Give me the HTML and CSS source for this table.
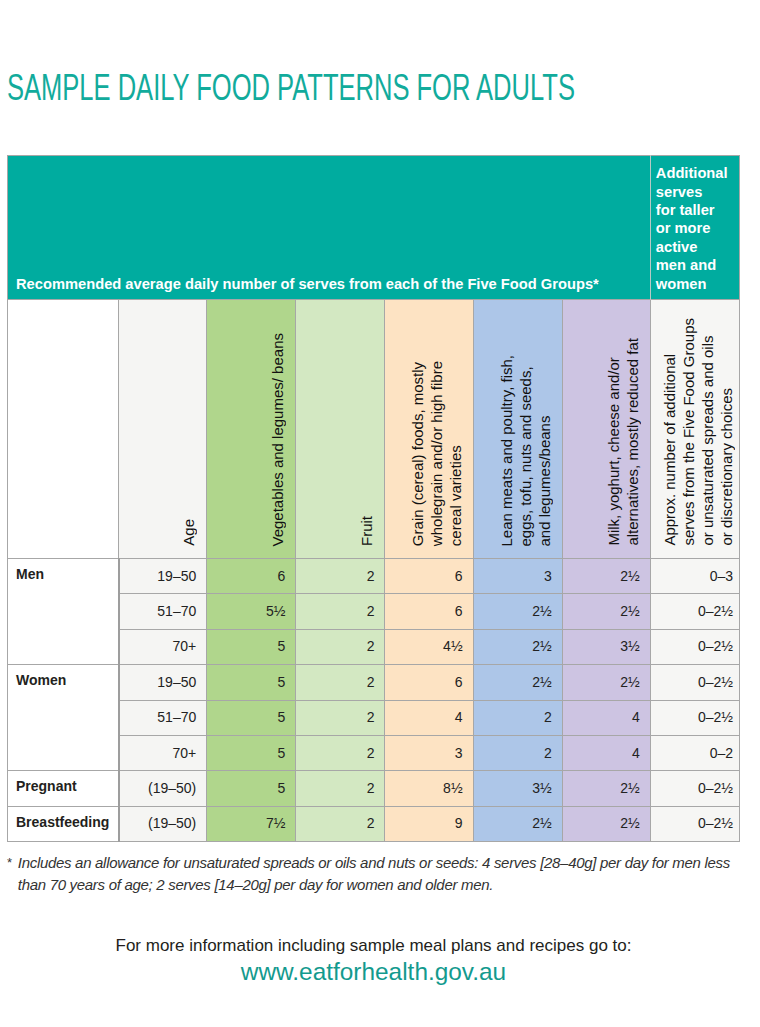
FILE: index.html
```html
<!DOCTYPE html>
<html lang="en">
<head>
  <meta charset="UTF-8" />
  <title>Sample daily food patterns for adults</title>
  <link rel="stylesheet" href="styles.css">
</head>
<body>
  <h1 class="title">SAMPLE DAILY FOOD PATTERNS FOR ADULTS</h1>

  <table class="serves">
    <colgroup>
      <col class="c-label"><col class="c-age"><col class="c-veg"><col class="c-fruit">
      <col class="c-grain"><col class="c-meat"><col class="c-milk"><col class="c-add">
    </colgroup>
    <thead>
      <tr class="band">
        <th colspan="7" class="band-main">Recommended average daily number of serves from each of the Five Food Groups*</th>
        <th class="band-side">Additional<br>serves<br>for taller<br>or more<br>active<br>men and<br>women</th>
      </tr>
      <tr class="groups">
        <th class="blank"></th>
        <th class="rot age"><div class="vt">Age</div></th>
        <th class="rot veg"><div class="vt">Vegetables and legumes/ beans</div></th>
        <th class="rot fruit"><div class="vt">Fruit</div></th>
        <th class="rot grain"><div class="vt">Grain (cereal) foods, mostly<br>wholegrain and/or high fibre<br>cereal varieties</div></th>
        <th class="rot meat"><div class="vt">Lean meats and poultry, fish,<br>eggs, tofu, nuts and seeds,<br>and legumes/beans</div></th>
        <th class="rot milk"><div class="vt">Milk, yoghurt, cheese and/or<br>alternatives, mostly reduced fat</div></th>
        <th class="rot add"><div class="vt">Approx. number of additional<br>serves from the Five Food Groups<br>or unsaturated spreads and oils<br>or discretionary choices</div></th>
      </tr>
    </thead>
    <tbody>
      <tr>
        <th rowspan="3" class="who">Men</th>
        <td class="age">19–50</td><td class="veg">6</td><td class="fruit">2</td><td class="grain">6</td><td class="meat">3</td><td class="milk">2½</td><td class="add">0–3</td>
      </tr>
      <tr>
        <td class="age">51–70</td><td class="veg">5½</td><td class="fruit">2</td><td class="grain">6</td><td class="meat">2½</td><td class="milk">2½</td><td class="add">0–2½</td>
      </tr>
      <tr>
        <td class="age">70+</td><td class="veg">5</td><td class="fruit">2</td><td class="grain">4½</td><td class="meat">2½</td><td class="milk">3½</td><td class="add">0–2½</td>
      </tr>
      <tr>
        <th rowspan="3" class="who">Women</th>
        <td class="age">19–50</td><td class="veg">5</td><td class="fruit">2</td><td class="grain">6</td><td class="meat">2½</td><td class="milk">2½</td><td class="add">0–2½</td>
      </tr>
      <tr>
        <td class="age">51–70</td><td class="veg">5</td><td class="fruit">2</td><td class="grain">4</td><td class="meat">2</td><td class="milk">4</td><td class="add">0–2½</td>
      </tr>
      <tr>
        <td class="age">70+</td><td class="veg">5</td><td class="fruit">2</td><td class="grain">3</td><td class="meat">2</td><td class="milk">4</td><td class="add">0–2</td>
      </tr>
      <tr>
        <th class="who">Pregnant</th>
        <td class="age">(19–50)</td><td class="veg">5</td><td class="fruit">2</td><td class="grain">8½</td><td class="meat">3½</td><td class="milk">2½</td><td class="add">0–2½</td>
      </tr>
      <tr>
        <th class="who">Breastfeeding</th>
        <td class="age">(19–50)</td><td class="veg">7½</td><td class="fruit">2</td><td class="grain">9</td><td class="meat">2½</td><td class="milk">2½</td><td class="add">0–2½</td>
      </tr>
    </tbody>
  </table>

  <p class="note"><span class="star">*</span><span>Includes an allowance for unsaturated spreads or oils and nuts or seeds: 4 serves [28–40g] per day for men less than 70 years of age; 2 serves [14–20g] per day for women and older men.</span></p>

  <footer class="more">
    <p>For more information including sample meal plans and recipes go to:</p>
    <a href="#" class="site">www.eatforhealth.gov.au</a>
  </footer>
</body>
</html>
```

FILE: styles.css
```css
body { margin: 0; padding: 0 7px; background: #fff; color: #231f20; font-family: "Liberation Sans", Arial, sans-serif; }

.title { margin: 0; padding-top: 68px; font-family: "Liberation Sans", Arial, sans-serif; font-weight: normal; font-size: 37px; line-height: 40px; color: #12ab9c; white-space: nowrap; transform: scaleX(0.69); transform-origin: left top; }

.serves { margin-top: 47px; width: 733px; border-collapse: collapse; table-layout: fixed; border: 1px solid #a7a7a7; font-size: 14px; }
.c-label { width: 111px; }
.c-age, .c-grain, .c-milk { width: 88px; }
.c-veg, .c-fruit, .c-meat, .c-add { width: 89px; }

.band th { background: #00ac9f; color: #fff; font-weight: bold; font-size: 14.7px; line-height: 18.4px; text-align: left; vertical-align: bottom; padding: 0 4px 6px 8px; height: 144px; box-sizing: border-box; }
.band .band-side { border-left: 1px solid #b7c9c5; padding: 0 2px 6px 5px; }

.groups th { height: 246px; padding: 0 8px 12px 0; vertical-align: bottom; border: 1px solid #a7a7a7; font-weight: normal; font-size: 15px; }
.groups .blank { background: #fff; }
.vt { writing-mode: vertical-rl; transform: rotate(180deg); margin-left: auto; line-height: 19px; white-space: nowrap; text-align: left; color: #111; }
.groups .add { padding-right: 3px; }

.serves tbody tr { height: 35.4px; }
.serves td { text-align: right; padding: 0 10px 1px 0; border: 1px solid #a7a7a7; color: #222; }
.serves td.add { padding-right: 6px; }
.who { text-align: left; vertical-align: top; padding: 7px 8px 0; font-weight: bold; background: #fff; border: 1px solid #a7a7a7; border-right: 2px solid #9d9d9d; }

.age { background: #f5f5f3; }
.veg { background: #b0d68c; }
.fruit { background: #d3e8c2; }
.grain { background: #fde3c3; }
.meat { background: #adc6e8; }
.milk { background: #cdc4e2; }
.add { background: #f6f6f4; }

.note { display: flex; gap: 6px; margin: 10px 0 0; font-size: 15px; line-height: 22px; font-style: italic; color: #333; letter-spacing: -0.3px; }
.note .star { font-style: normal; font-size: 13px; }

.more { width: 733px; text-align: center; margin-top: 40px; }
.more p { margin: 0; font-size: 17px; line-height: 20px; color: #231f20; }
.site { display: inline-block; margin-top: 1px; font-size: 24.4px; line-height: 30px; color: #139a8e; text-decoration: none; }
```
